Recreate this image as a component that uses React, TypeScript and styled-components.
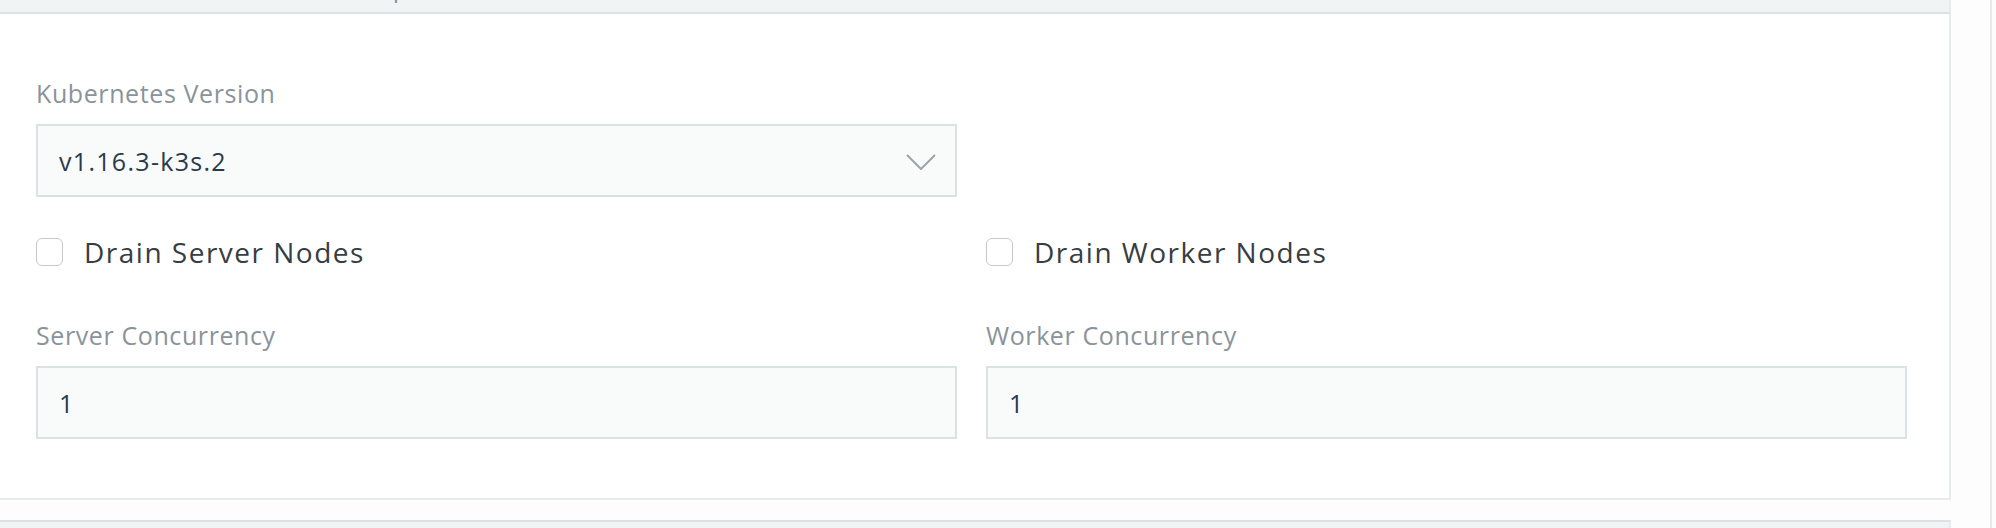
import React from 'react';
import styled, { createGlobalStyle } from 'styled-components';

const GlobalStyle = createGlobalStyle`
  html, body {
    margin: 0;
    padding: 0;
    background: #fdfdfd;
    font-family: 'Open Sans', 'Liberation Sans', sans-serif;
  }
  * {
    box-sizing: border-box;
  }
`;

const Page = styled.div`
  display: flex;
  width: 1996px;
  height: 528px;
  overflow: hidden;
`;

const Main = styled.div`
  flex: 0 0 1951px;
  display: flex;
  flex-direction: column;
`;

const Gutter = styled.div`
  flex: 1;
  padding-left: 39px;
  background: #fdfdfd;
`;

const Track = styled.div`
  height: 100%;
  border-left: 2px solid #e8e9ea;
  background: #fcfcfc;
`;

const SectionHeader = styled.div<{ $top?: boolean }>`
  background: #f1f4f5;
  border-right: 2px solid #e6ebed;
  ${({ $top }) =>
    $top
      ? `
    height: 14px;
    border-bottom: 2px solid #dbe2e5;
    overflow: hidden;
    padding-left: 50px;
  `
      : `
    flex: 1;
    border-top: 2px solid #dbe2e5;
  `}
`;

const HeaderText = styled.div`
  margin-top: -28px;
  font-size: 25px;
  line-height: 30px;
  letter-spacing: 0.6px;
  color: #8a939a;
`;

const Card = styled.div`
  background: #ffffff;
  border-right: 2px solid #e6ebed;
  border-bottom: 2px solid #e6ebed;
  padding: 64px 42px 59px 36px;
`;

const Spacer = styled.div`
  height: 20px;
  flex: 0 0 20px;
`;

const Grid = styled.div<{ $top: number }>`
  display: grid;
  grid-template-columns: 921px 921px;
  column-gap: 29px;
  margin-top: ${({ $top }) => $top}px;
`;

const Field = styled.div`
  display: flex;
  flex-direction: column;
`;

const Label = styled.div`
  font-size: 25px;
  line-height: 30px;
  height: 30px;
  letter-spacing: 0.6px;
  color: #8a939a;
  margin-bottom: 16px;
`;

const Box = styled.div`
  position: relative;
  display: flex;
  align-items: center;
  height: 73px;
  width: 921px;
  padding: 0 21px;
  border: 2px solid #dbe2e5;
  background: #f9fbfb;
  font-size: 25px;
  letter-spacing: 1.3px;
  color: #2b3a4a;
`;

const Chevron = styled.svg`
  position: absolute;
  right: 19px;
  top: 28px;
`;

const CheckRow = styled.label`
  display: flex;
  align-items: center;
  height: 28px;
  gap: 21px;
  font-size: 28px;
  letter-spacing: 1.5px;
  color: #383d41;
`;

const CheckBox = styled.span`
  flex: 0 0 27px;
  width: 27px;
  height: 28px;
  border: 1.5px solid #c6cacd;
  border-radius: 6px;
  background: #ffffff;
`;

const Check = ({ label }: { label: string }) => (
  <CheckRow>
    <CheckBox />
    {label}
  </CheckRow>
);

export default function App() {
  return (
    <>
      <GlobalStyle />
      <Page>
        <Main>
          <SectionHeader $top>
            <HeaderText>Customize the kubernetes options</HeaderText>
          </SectionHeader>
          <Card>
            <Grid $top={0}>
              <Field>
                <Label>Kubernetes Version</Label>
                <Box>
                  v1.16.3-k3s.2
                  <Chevron width="30" height="16" viewBox="0 0 30 16" fill="none">
                    <polyline points="1,1 15,15 29,1" stroke="#9ba4aa" strokeWidth="2" />
                  </Chevron>
                </Box>
              </Field>
            </Grid>
            <Grid $top={41}>
              <Check label="Drain Server Nodes" />
              <Check label="Drain Worker Nodes" />
            </Grid>
            <Grid $top={54}>
              <Field>
                <Label>Server Concurrency</Label>
                <Box>1</Box>
              </Field>
              <Field>
                <Label>Worker Concurrency</Label>
                <Box>1</Box>
              </Field>
            </Grid>
          </Card>
          <Spacer />
          <SectionHeader />
        </Main>
        <Gutter>
          <Track />
        </Gutter>
      </Page>
    </>
  );
}
